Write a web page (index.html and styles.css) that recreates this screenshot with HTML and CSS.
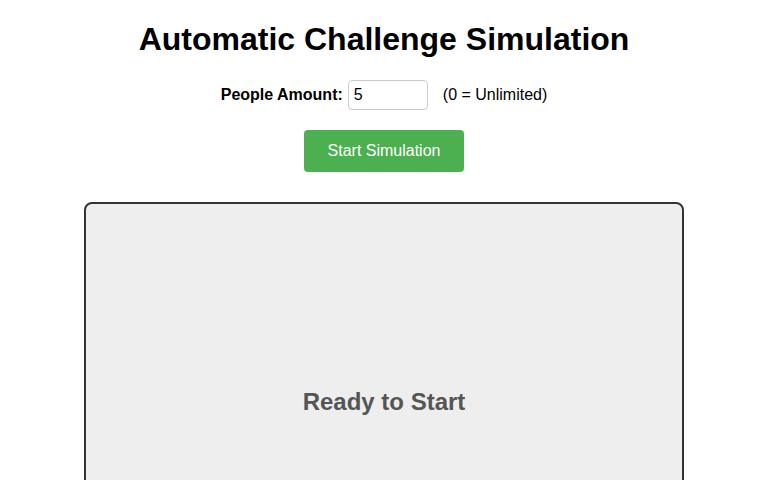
FILE: index.html
```html
<!DOCTYPE html>
<html>

<head>
	<meta charset="utf-8">
	<meta name="viewport" content="width=device-width, initial-scale=1.0">
	<title>Automatic Challenge Simulation</title>
	<link rel="stylesheet" href="styles.css">
</head>

<body>
	<h1>Automatic Challenge Simulation</h1>
	<div class="controls">
		<label for="amount">People Amount:</label>
		<input type="number" id="amount" class="input" value="5" min="0">
		<span class="hint">(0 = Unlimited)</span>
	</div>
	<button class="start">Start Simulation</button>
	<div class="stage">
		<div class="status">Ready to Start</div>
	</div>
</body>

</html>
```

FILE: styles.css
```css
* {
	box-sizing: border-box;
}

body {
	margin: 0;
	font-family: "Liberation Sans", Arial, sans-serif;
	text-align: center;
	background: #fff;
	color: #000;
}

h1 {
	font-size: 32px;
	margin: 21px 0 22px;
}

.controls {
	display: flex;
	justify-content: center;
	align-items: center;
	margin-bottom: 20px;
	font-size: 16px;
}

.controls label {
	font-weight: bold;
	margin-right: 5px;
}

.input {
	width: 80px;
	height: 30px;
	padding: 5px;
	font-size: 16px;
	font-family: inherit;
	border: 1px solid #ccc;
	border-radius: 4px;
	-moz-appearance: textfield;
}

.input::-webkit-inner-spin-button,
.input::-webkit-outer-spin-button {
	-webkit-appearance: none;
	margin: 0;
}

.hint {
	margin-left: 15px;
}

.start {
	font-size: 16px;
	font-family: inherit;
	padding: 12px 24px;
	background: #4caf50;
	color: #fff;
	border: none;
	border-radius: 4px;
	cursor: pointer;
}

.stage {
	width: 600px;
	height: 400px;
	margin: 30px auto 0;
	border: 2px solid #333;
	border-radius: 8px;
	background: #eee;
	display: flex;
	justify-content: center;
	align-items: center;
}

.status {
	font-size: 24px;
	font-weight: bold;
	color: #555;
}
```
